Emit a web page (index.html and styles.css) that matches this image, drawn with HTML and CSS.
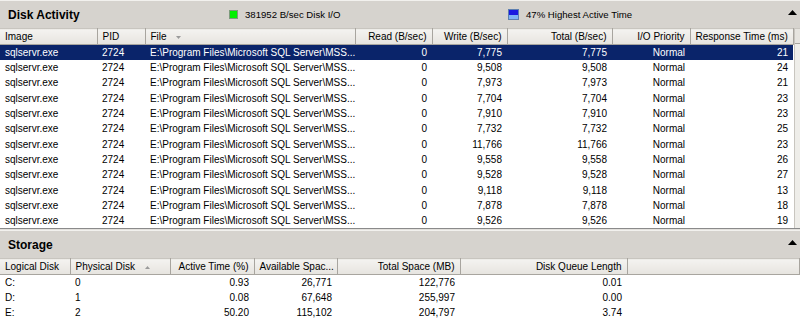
FILE: index.html
```html
<!DOCTYPE html>
<html lang="en">
<head>
    <meta charset="UTF-8">
    <meta name="viewport" content="width=device-width, initial-scale=1.0">
    <title>Resource Monitor - Disk</title>

    <link rel="stylesheet" href="styles.css">
</head>
<body>

    <div class="panel activity">
        <div class="panel-head">
            <h2 class="panel-title">Disk Activity</h2>
            <div class="legend legend-io"><span class="swatch green"></span>381952 B/sec Disk I/O</div>
            <div class="legend legend-time"><span class="swatch blue"></span>47% Highest Active Time</div>
            <svg class="collapse" width="9" height="5" viewBox="0 0 9 5"><path d="M0 5 L4.5 0 L9 5 Z" fill="#000"/></svg>
        </div>

        <div class="grid-wrap">
            <table class="grid">
                <colgroup>
                    <col style="width:97px"><col style="width:48px"><col style="width:210px"><col style="width:77px">
                    <col style="width:75px"><col style="width:105px"><col style="width:78px"><col style="width:103px">
                </colgroup>
                <thead>
                    <tr>
                        <th>Image</th>
                        <th>PID</th>
                        <th>File <svg class="sort" width="5" height="3" viewBox="0 0 5 3"><path d="M0 0 L5 0 L2.5 3 Z" fill="#9a9a9a"/></svg></th>
                        <th class="num">Read (B/sec)</th>
                        <th class="num">Write (B/sec)</th>
                        <th class="num">Total (B/sec)</th>
                        <th class="num">I/O Priority</th>
                        <th class="num">Response Time (ms)</th>
                    </tr>
                </thead>
                <tbody class="activity-rows"></tbody>
            </table>
            <div class="scrollbar">
                <div class="scroll-btn"></div>
            </div>
        </div>
    </div>

    <div class="panel storage">
        <div class="panel-head">
            <h2 class="panel-title">Storage</h2>
            <svg class="collapse" width="9" height="5" viewBox="0 0 9 5"><path d="M0 5 L4.5 0 L9 5 Z" fill="#000"/></svg>
        </div>

        <table class="grid">
            <colgroup>
                <col style="width:70px"><col style="width:100px"><col style="width:84px"><col style="width:83px">
                <col style="width:123px"><col style="width:167px"><col>
            </colgroup>
            <thead>
                <tr>
                    <th>Logical Disk</th>
                    <th>Physical Disk <svg class="sort up" width="5" height="3" viewBox="0 0 5 3"><path d="M0 3 L5 3 L2.5 0 Z" fill="#9a9a9a"/></svg></th>
                    <th class="num">Active Time (%)</th>
                    <th class="num">Available Spac...</th>
                    <th class="num">Total Space (MB)</th>
                    <th class="num">Disk Queue Length</th>
                    <th></th>
                </tr>
            </thead>
            <tbody>
                <tr><td>C:</td><td>0</td><td class="num">0.93</td><td class="num">26,771</td><td class="num">122,776</td><td class="num">0.01</td><td></td></tr>
                <tr><td>D:</td><td>1</td><td class="num">0.08</td><td class="num">67,648</td><td class="num">255,997</td><td class="num">0.00</td><td></td></tr>
                <tr><td>E:</td><td>2</td><td class="num">50.20</td><td class="num">115,102</td><td class="num">204,797</td><td class="num">3.74</td><td></td></tr>
            </tbody>
        </table>
    </div>

    <script>
        const rows = document.querySelector('.activity-rows')
        const writes = [
            ['7,775', 21], ['9,508', 24], ['7,973', 21], ['7,704', 23],
            ['7,910', 23], ['7,732', 25], ['11,766', 23], ['9,558', 26],
            ['9,528', 27], ['9,118', 13], ['7,878', 18], ['9,526', 19]
        ]

        writes.forEach((w, i) => {
            const tr = document.createElement('tr')
            if (i === 0) tr.className = 'selected'
            tr.innerHTML = `
                <td>sqlservr.exe</td>
                <td>2724</td>
                <td>E:\\Program Files\\Microsoft SQL Server\\MSS...</td>
                <td class="num">0</td>
                <td class="num">${w[0]}</td>
                <td class="num">${w[0]}</td>
                <td class="num">Normal</td>
                <td class="num">${w[1]}</td>`
            rows.appendChild(tr)
        })
    </script>
</body>
</html>
```

FILE: styles.css
```css
* {
    margin: 0;
    padding: 0;
    box-sizing: border-box;
}

body {
    width: 800px;
    height: 323px;
    overflow: hidden;
    background-color: #ffffff;
    font-family: "Liberation Sans", Arial, sans-serif;
    font-size: 10px;
    color: #000;
}

.panel-head {
    display: flex;
    align-items: center;
    height: 28px;
    background-color: #d6d3ce;
    border-top: 1px solid #f2f1ee;
    position: relative;
}

.panel-title {
    width: 229px;
    padding-left: 8px;
    font-size: 12px;
    font-weight: bold;
}

.legend {
    display: flex;
    align-items: center;
    gap: 7px;
    font-size: 9.6px;
}

.legend-io {
    width: 279px;
}

.swatch {
    display: inline-block;
    width: 9px;
    height: 9px;
}

.swatch.green {
    background-color: #00f000;
    border: 1px solid #7c9a7c;
}

.swatch.blue {
    width: 11px;
    height: 11px;
    border: 1px solid #5d7fb0;
    background: linear-gradient(to bottom, #1a1ae0 0, #1a1ae0 60%, #7fb4f5 60%, #7fb4f5 100%);
}

.collapse {
    position: absolute;
    right: 3px;
    top: 9px;
}

.grid-wrap {
    display: flex;
    height: 201px;
    overflow: hidden;
    border-bottom: 1px solid #8a8a8a;
}

.grid {
    table-layout: fixed;
    border-collapse: collapse;
    border-spacing: 0;
}

.activity .grid {
    width: 793px;
}

.storage .grid {
    width: 800px;
}

.grid th {
    height: 16px;
    padding: 0 5px;
    font-weight: normal;
    text-align: left;
    white-space: nowrap;
    overflow: hidden;
    background: linear-gradient(to bottom, #f4f3f0, #e6e4df);
    border-top: 1px solid #c8c5bf;
    border-right: 1px solid #a8a59f;
    border-bottom: 1px solid #a8a59f;
}

.grid td {
    height: 15.35px;
    padding: 0 5px;
    white-space: nowrap;
    overflow: hidden;
}

.grid .num {
    text-align: right;
}

.sort {
    margin-left: 7px;
    vertical-align: middle;
}

.selected td {
    background-color: #0a246a;
    color: #fff;
}

.scrollbar {
    flex: 1;
    background-color: #eeede9;
    border-left: 1px solid #c8c5bf;
}

.scroll-btn {
    height: 16px;
    background-color: #e6e4df;
    border-bottom: 1px solid #a8a59f;
    border-top: 1px solid #c8c5bf;
}

.storage {
    border-top: 1px solid #e2e0dc;
}

.storage .grid td {
    height: 15px;
}
```
